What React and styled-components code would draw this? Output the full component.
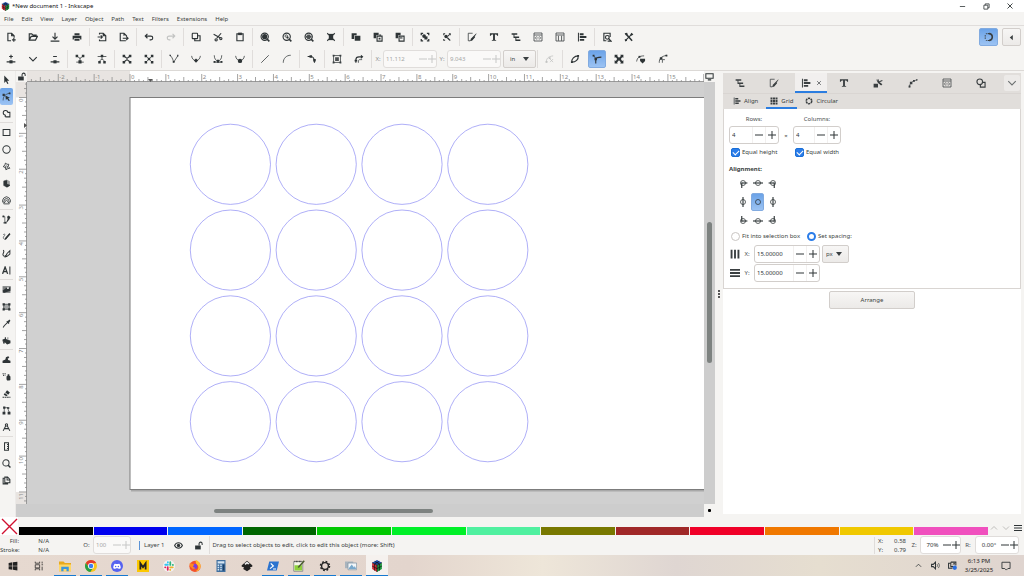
import React, { useState, useEffect, useRef } from 'react';
import styled, { createGlobalStyle } from 'styled-components';

const GlobalStyle = createGlobalStyle`
  * {
    box-sizing: border-box;
  }

  body {
    margin: 0;
    background: #f5f4f2;
    color: #3a3f41;
    font-family: 'Noto Sans', 'Open Sans', sans-serif;
    font-size: 6px;
    line-height: 8px;
  }

  button,
  input,
  select {
    margin: 0;
    padding: 0;
    border: none;
    background: none;
    color: inherit;
    font: inherit;
  }

  svg {
    display: block;
    flex-shrink: 0;
  }
`;

// every glyph is drawn on a 16x16 grid
const line = { fill: 'none', stroke: 'currentColor', strokeWidth: 1.8 };
const thin = { fill: 'none', stroke: 'currentColor', strokeWidth: 1.2 };

const ICONS = {
  newDoc: (
    <>
      <path {...line} d='M8 14H3V2h6l4 4v3M9 2v4h4' />
      <path {...line} d='M12.500 9.500v6M9.500 12.500h6' />
    </>
  ),
  open: <path {...line} d='M2 13V3h4l2 2h5v2M2 13l3-6h10l-3 6z' />,
  save: <path {...line} d='M8 1v10M4 7.500l4 4 4-4M1 14.500h14' />,
  print: (
    <>
      <path d='M4 2h8v3H4zM1 6h14v6h-2v-2H3v2H1z' />
      <path d='M4 11h8v3H4z' />
    </>
  ),
  importDoc: (
    <>
      <path {...line} d='M4 4V2h6l4 4v8H4v-2M10 2v4h4' />
      <path {...line} d='M1 8h7M6 5.500L8.500 8 6 10.500' />
    </>
  ),
  exportDoc: (
    <>
      <path {...line} d='M11 14H2V2h6l4 4v1M8 2v4' />
      <path {...line} d='M6 10h8M11.500 7l3 3-3 3' />
    </>
  ),
  undo: <path {...line} d='M5.500 3L2 6.500 5.500 10M2 6.500h9c4 0 4 6 0 6H9' />,
  redo: <path {...line} d='M10.500 3L14 6.500 10.500 10M14 6.500H5c-4 0-4 6 0 6h2' />,
  copy: (
    <>
      <rect {...line} x='2' y='2' width='8.500' height='8.500' rx='1' />
      <path {...line} d='M6 10.500V14h8.500V6H10.500' />
    </>
  ),
  cut: (
    <>
      <path {...line} d='M1 3.500l11 6M13 2L6 10' />
      <circle {...line} cx='5' cy='12.500' r='1.800' />
      <circle {...line} cx='12.500' cy='10.500' r='1.800' />
    </>
  ),
  paste: (
    <>
      <path {...line} d='M3 3h10v11H3z' />
      <path d='M5 1h6v4H5z' />
    </>
  ),
  zoomFill: (
    <>
      <circle {...line} cx='7.500' cy='7.500' r='5.800' />
      <circle cx='7.500' cy='7.500' r='4.200' />
      <path {...line} strokeWidth='2.400' d='M11 11l4 4' />
    </>
  ),
  zoomDraw: (
    <>
      <circle {...line} cx='7.500' cy='7.500' r='5.800' />
      <path {...line} strokeWidth='2.400' d='M11 11l4 4' />
      <circle {...thin} cx='6.800' cy='6.500' r='2' />
      <path d='M7.500 7.500h3v3h-3z' />
    </>
  ),
  zoomPage: (
    <>
      <circle {...line} cx='7.500' cy='7.500' r='5.800' />
      <path {...line} strokeWidth='2.400' d='M11 11l4 4' />
      <path d='M5 4h5v7H5zM3 6h9v3H3z' opacity='.85' />
    </>
  ),
  zoomCenter: (
    <>
      <path d='M4.500 3h7v10h-7z' />
      <path {...line} d='M2 2l3 3M14 2l-3 3M2 14l3-3M14 14l-3-3' />
    </>
  ),
  duplicate: <path d='M1 2h8v3H5v6H1zM6 6h9v8H6z' />,
  clone: (
    <>
      <path d='M1 1h8v4H5v5H1z' />
      <path {...line} d='M6.500 6.500h8v8h-8z' />
      <path d='M9 9h3v3H9zM10 4h3v2h-3z' />
    </>
  ),
  unclone: (
    <>
      <path d='M1 1h8v4H5v5H1z' />
      <path {...line} d='M6.500 6.500h8v8h-8z' />
      <path {...line} d='M8 9.500h4' />
    </>
  ),
  group: (
    <>
      <path d='M1 1h4v2H3v2H1zM11 1h4v4h-2V3h-2zM1 11h2v2h2v2H1zM13 11h2v4h-4v-2h2z' />
      <circle cx='6.500' cy='6.500' r='3' />
      <path d='M7 7h5v5H7z' />
    </>
  ),
  ungroup: (
    <>
      <path d='M2 2h3v1.500H3.500V5H2zM11 2h3v3h-1.500V3.500H11zM2 11h1.500v1.500H5V14H2z' />
      <circle cx='6.500' cy='7' r='2.800' />
      <path d='M9 8l5 5-2 1-4-4zM9 6l3-3 1 1-3 3z' />
    </>
  ),
  fillStroke: (
    <>
      <path {...thin} d='M9 2H2v12h3' />
      <path d='M15 2L7 10l-3 5 5-3L15 3z' />
      <path {...line} d='M12 7v1l-5 6' />
    </>
  ),
  textT: <path d='M1.500 2h13v4H13c-.3-1.500-1-2-3.500-2v8.500l2 .5v1h-7v-1l2-.5V4C4 4 3.300 4.500 3 6H1.500z' />,
  layers: <path d='M1 2h9v2.500H1zM4 4h1.500v4H4zM4 7h9v2.500H4zM7 9h1.500v4H7zM7 12h8v2.500H7z' />,
  xml: (
    <>
      <path {...thin} d='M1.600 1.600h12.800v12.800H1.600z' />
      <path {...thin} d='M2 4.800h12' />
      <path {...thin} d='M6 7L4 9.500 6 12M10 7l2 2.500-2 2.500M7 9.500h2' />
    </>
  ),
  css: (
    <>
      <path {...thin} d='M1.600 1.600h12.800v12.800H1.600z' />
      <path {...thin} d='M2 4.800h12' />
      <path {...thin} d='M5.500 6v8M10.500 6v8' />
    </>
  ),
  align: (
    <>
      <path d='M1.500 1h1.600v14H1.500z' />
      <path d='M4.500 2h6v3h-6zM4.500 6.500H15v3H4.500zM4.500 11h7v3h-7z' />
    </>
  ),
  docProps: (
    <>
      <path {...line} d='M7 14H3V2h10v6' />
      <circle {...line} cx='8.500' cy='8.500' r='3' />
      <path {...line} d='M10 10l4.500 4.500H9' />
    </>
  ),
  prefs: (
    <>
      <path stroke='currentColor' strokeWidth='2.400' d='M3 3l10 11' />
      <path {...line} d='M13 3L2.500 13.500' />
      <path d='M1 2l4-1 1 3-3 1zM12 1l3 3-3 2-2-2zM1 12l3-1 1 3-3 1z' />
    </>
  ),
  addNode: (
    <>
      <path {...line} d='M8 1v6M5 4h6M1 12.500h14' />
      <path d='M5.500 10h5v5h-5z' />
    </>
  ),
  chevron: <path {...line} d='M2 5l6 6 6-6' />,
  chevronUp: <path {...line} d='M2 11l6-6 6 6' />,
  delNode: (
    <>
      <path {...line} d='M5 4h6M1 12.500h14' />
      <path d='M5.500 10h5v5h-5z' />
    </>
  ),
  joinNode: (
    <>
      <path d='M1 1h4v4H1zM11 1h4v4h-4zM5.500 10h5v5h-5z' />
      <path {...thin} d='M4 4l4 3 4-3M8 6v5M2 13h12' />
    </>
  ),
  breakNode: (
    <>
      <path d='M6 1h4v4H6zM2 11h4v4H2zM10 11h4v4h-4z' />
      <path {...thin} d='M1 4h14M8 5v4M4 11l4-3 4 3' />
    </>
  ),
  joinSeg: (
    <>
      <path d='M1 1h4v4H1zM11 1h4v4h-4zM1 11h4v4H1zM11 11h4v4h-4z' />
      <path {...line} d='M4 4l4 3 4-3M4 12l4-3 4 3' />
    </>
  ),
  delSeg: (
    <>
      <path d='M1 1h4v4H1zM11 1h4v4h-4zM1 11h4v4H1zM11 11h4v4h-4zM6 6h4v4H6z' />
      <path {...thin} d='M5 5l6 6M11 5l-6 6' />
    </>
  ),
  cusp: (
    <>
      <path {...thin} d='M1 2c3 1 5 6 6.500 11L14 3' />
      <path d='M6 11h3v3H6zM1 1h2v2H1zM13 1h2v3h-2z' />
    </>
  ),
  smooth: (
    <>
      <path {...thin} d='M1 3c1 10 13 10 14 0' />
      <path d='M8 7l3.500 3.500L8 14l-3.500-3.500z' />
    </>
  ),
  symmetric: (
    <>
      <path {...thin} d='M2 2c0 12 12 12 12 0M1 13h14' />
      <path d='M6 9h4v5H6zM1 11h3v3H1zM12 11h3v3h-3z' />
    </>
  ),
  autoSmooth: (
    <>
      <path {...thin} d='M1 3c1 10 13 10 14 0' />
      <circle cx='8' cy='11' r='3.500' />
    </>
  ),
  segLine: <path {...thin} d='M2 14L14 2' />,
  segCurve: <path {...thin} d='M2 14C2 7 7 2 14 2' />,
  corners: (
    <>
      <path {...line} d='M1 4h5c4 0 6 3 6 10' />
      <path d='M4 2h4v4H4zM10 8h4v4h-4z' />
    </>
  ),
  objToPath: (
    <>
      <path {...thin} d='M2.500 2.500h11v11h-11z' />
      <path d='M1 1h3v3H1zM12 1h3v3h-3zM1 12h3v3H1zM12 12h3v3h-3zM5 5h6v6H5z' opacity='.85' />
    </>
  ),
  strokeToPath: (
    <>
      <path {...line} d='M3 14V9c0-3 2-4.500 5-4.500h4' />
      <path {...thin} d='M7 14v-3c0-1.500 1-2 3-2h3' />
      <path d='M11 1l4 3.500-4 3.500zM1 9h4v3H1z' />
    </>
  ),
  lpe: (
    <>
      <path {...thin} d='M2 14C2 7 5 4 13 3M8 8l5 5M13 8l-5 5' />
      <path d='M1 11h3v3H1zM6 5h3v3H6z' />
    </>
  ),
  editClip: (
    <>
      <path {...line} d='M3 13C2 8 7 3 13 3c1 6-4 10-10 10z' />
      <path d='M1.500 11.500h3v3h-3zM11.500 1.500h3v3h-3z' />
    </>
  ),
  handles: (
    <>
      <path {...line} d='M6 15V9c0-2 3-4 9-4' />
      <path {...thin} d='M2 2l4 5' />
      <path d='M1 1h3v3H1zM4 6h4v4H4z' />
    </>
  ),
  transform: (
    <>
      <path d='M1 1h5L5 3l3 3 3-3-1-2h5v5l-2-1-2 3 2 3 2-1v5h-5l1-2-3-3-3 3 1 2H1v-5l2 1 2-3-2-3-2 1z' />
    </>
  ),
  mask: (
    <>
      <path {...thin} d='M1 12C2 6 5 3 13 3' />
      <path d='M6.500 7.500h8V11l-4 4-4-4z' />
      <path d='M4 3h3v3H4z' />
    </>
  ),
  outline: (
    <>
      <path {...thin} d='M2 14C2 7 5 4 14 2' />
      <path {...thin} d='M7 14V9h4' />
      <path d='M3 5h4v4H3zM12 1h3v3h-3z' />
    </>
  ),
  snap: (
    <>
      <path fill='none' stroke='currentColor' strokeWidth='2.600' d='M8 2.500c7 0 7 11 0 11' />
      <path fill='none' stroke='currentColor' strokeWidth='1.800' strokeDasharray='2.200 1.500' d='M8 2.500H3M8 13.500H3M2 5v7' />
    </>
  ),
  triLeft: <path d='M11 2v12L4 8z' />,
  triDown: <path d='M2 4h12L8 12z' />,
  cursor: <path d='M4 1l9 9H9l2.500 5-2 1L7 11l-3 3z' />,
  node: (
    <>
      <path {...thin} d='M2 15C2 8 5 4 14 2' />
      <path d='M1 3h4v4H1zM12 1h3v3h-3zM6 6l8 4-3 1 3 4-2 1-3-4-2 2z' />
    </>
  ),
  builder: <path {...line} d='M6 11a4.200 4.200 0 1 1 4.500-5H14v8H7c-2 0-2-3 0-3' />,
  rect: <path {...line} d='M2 2.500h12v11H2z' />,
  circle: <circle {...line} cx='8' cy='8' r='6.500' />,
  star: (
    <>
      <path {...line} strokeWidth='1.500' d='M6 2l3 2 3 0-1 4 3 3-4 1-3 2-1-4-4-2 3-2z' />
      <circle {...thin} cx='8' cy='9' r='2' />
    </>
  ),
  box3d: (
    <>
      <path d='M8 1l6 3v8l-6 3-6-3V4z' opacity='.45' />
      <path d='M3 3l6-1v7l5 1v2l-5 3-6-4z' />
    </>
  ),
  spiral: (
    <path {...line} strokeWidth='1.500' d='M13 13.500A7 7 0 1 0 3 13.500M11 12.500A4.500 4.500 0 1 0 5 12.500M9.500 11a2 2 0 1 0-3 0M3 14h10' />
  ),
  pen: (
    <>
      <path {...thin} d='M1 3h4v9M2 14h6' />
      <path d='M9 3l3-2 3 3-2 4-4 5-1-1 2-5zM1 1h3v3H1zM4 12h4v3H4z' />
    </>
  ),
  pencil: (
    <>
      <path d='M13 2l2 2-8 9-3 1 1-3z' />
      <path {...thin} d='M2 5c3-3 4 0 2 2s-2 4-1 5' />
      <path {...line} d='M6 13L14 3' />
    </>
  ),
  calligraphy: (
    <>
      <path {...line} d='M2 2c4 3-2 6 0 9s4 2 5 0' />
      <path {...line} d='M6 14l3-6 5-5v6l-5 4z' />
    </>
  ),
  textA: (
    <>
      <path {...line} strokeWidth='2.400' d='M1 14L5.500 2 10 14M3 10h5' />
      <path {...line} d='M14 1v14' />
    </>
  ),
  gradient: (
    <>
      <path d='M1 2h14v12H1z' opacity='.6' />
      <path d='M1 10l7-5 3 2 4-5v8L3 14z' />
      <path d='M9 4h3v3H9z' fill='#ddd' />
    </>
  ),
  mesh: (
    <>
      <path d='M3 4h10v9H3z' opacity='.4' />
      <path d='M1 2h4v4H1zM11 2h4v4h-4zM1 11h4v4H1zM11 11h4v4h-4z' />
      <path {...thin} d='M3 4h10v9H3z' />
    </>
  ),
  dropper: (
    <>
      <path d='M10 4l3-3 2 2-3 4z' />
      <path {...line} d='M11 5L4 12l-2 3' />
      <path stroke='currentColor' strokeWidth='2' d='M8.500 4l4 4' />
    </>
  ),
  bucket: <path d='M1 6l4-1V2h2v3l3 2V2h1v5l4 1v5l-6 2-4-4-1 3-2-1V9L1 10z' />,
  tweak: <path d='M1 14v-4l5-2 1-4 4-2 2 2-2 2h-1l1 3 4 1v4z' />,
  spray: (
    <>
      <path d='M8 8l2-2V4h3v2l2 2v6l-2 1H9l-1-2z' />
      <path {...line} strokeDasharray='2 1.500' d='M1 3h7M2 6h4' />
    </>
  ),
  eraser: (
    <>
      <path d='M9 2l5 4-3 4-5-4zM5 7l5 4-2 2-5-3z' />
      <path {...line} strokeDasharray='3 1' d='M1 14.500h14' />
    </>
  ),
  connector: (
    <>
      <path {...thin} d='M4 3h7v4l2 4M4 3v9' />
      <path d='M2 1h4v4H2zM1 10h5v5H1zM10 10h5v5h-5zM9 2h4v3H9z' />
    </>
  ),
  lpeTool: <path {...line} d='M2 14L6.500 5.500M9.500 5.500L14 14M4.500 10h7M6 3.500a2 2 0 1 1 4 0 2 2 0 1 1-4 0' />,
  measure: <path {...line} d='M4.500 1.500h7v13h-7zM9 4.500h2M9 8h2M9 11.500h2' />,
  zoom: (
    <>
      <circle {...line} cx='7' cy='7' r='5.500' />
      <path {...line} strokeWidth='2.500' d='M11 11l4 4' />
    </>
  ),
  pages: <path {...line} d='M4 4H2v10h8v-2M5 2h5l4 4v6H5zM9 2v5h4' />,
  lock: (
    <>
      <path d='M2 8h10v7H2z' />
      <path {...line} d='M9 8V5c0-4 5.500-4 5.500 0v2' />
    </>
  ),
  monitor: <path {...line} d='M1.500 3h13v8h-13zM5 14h6' />,
  objects: (
    <>
      <path d='M1 9h7v6H1zM5 2l5 4 5 4-2 2-5-4z' />
      <path {...line} d='M8 2l1 5M10 6l5-2' />
    </>
  ),
  nodes: (
    <>
      <path {...thin} d='M2 15c1-7 4-10 13-12' />
      <path d='M1 12h3v3H1zM3 6h4v4H3zM8 3h3v3H8zM13 2h2v2h-2z' />
    </>
  ),
  shapes: (
    <>
      <circle {...line} cx='6' cy='6' r='4.500' />
      <path {...line} d='M11 7h3.500v7.500H7V11' />
    </>
  ),
  grid: (
    <path d='M1 1h4v4H1zM6 1h4v4H6zM11 1h4v4h-4zM1 6h4v4H1zM6 6h4v4H6zM11 6h4v4h-4zM1 11h4v4H1zM6 11h4v4H6zM11 11h4v4h-4z' />
  ),
  ring: <circle cx='8' cy='8' r='5.500' fill='none' stroke='currentColor' strokeWidth='3' strokeDasharray='4.500 1.260' />,
  bars: <path d='M1 1h3v14H1zM6.500 1h3v14h-3zM12 1h3v14h-3z' />,
  rows: <path d='M0 1.500h16v3H0zM0 6.500h16v3H0zM0 11.500h16v3H0z' />,
  menu: <path d='M0 2h16v2H0zM0 7h16v2H0zM0 12h16v2H0z' />,
  minus: <path d='M0 7h16v2H0z' />,
  plus: <path d='M0 7h16v2H0zM7 0h2v16H7z' />,
  x: <path {...line} d='M3 3l10 10M13 3L3 13' />,
  eye: (
    <>
      <path {...line} d='M1 8c3-6.500 11-6.500 14 0-3 6.500-11 6.500-14 0z' />
      <circle cx='8' cy='8' r='3' />
    </>
  ),
  min: <path {...line} d='M2 8h12' />,
  restore: <path {...line} d='M2 5h9v9H2zM5 5V2h9v9h-3' />,
  speaker: (
    <>
      <path {...line} d='M1 6h3l4-4v12l-4-4H1z' />
      <path {...thin} d='M10.500 5.500c1.500 1.500 1.500 3.500 0 5M13 3.500c2.500 3 2.500 6 0 9' />
    </>
  ),
  network: (
    <>
      <path {...line} d='M8 13H1V4h3M5 2h9v6M5 2v8h5' />
      <path {...thin} d='M8 7l4-3M9 4h3v3' />
      <circle cx='12' cy='12' r='3.800' fill='#2a6fe0' />
    </>
  ),
  bell: <path {...line} strokeWidth='1.400' d='M1.500 2h13v10H11l-2.500 2.500L6 12H1.500z' />,
  windows: <path d='M1 3l6-1v5.500H1zM8 1.800L15 1v6.500H8zM1 8.500h6V14l-6-1zM8 8.500h7V15l-7-1z' />,
  taskView: <path {...thin} d='M2 1v2.500h7V1M2 6h7v5H2zM2 15v-2.500h7V15M13 1v3M13 9v6M12 6h2.500' />,
  folder: (
    <>
      <path fill='#e8a91c' d='M0 2h6l2 2h8v11H0z' />
      <path fill='#ffd767' d='M0 6h16v9H0z' />
      <path fill='#3b96dd' d='M3 9h10v6h-3v-3H6v3H3z' />
    </>
  ),
  chrome: (
    <>
      <circle cx='8' cy='8' r='8' fill='#f8c61c' />
      <path fill='#e33b2e' d='M1.100 4a8 8 0 0 1 13.800 0L8 4.500 5 9.500z' />
      <path fill='#27a047' d='M1.100 4a8 8 0 0 0 6 12l3.500-5.500L5 10z' />
      <circle cx='8' cy='8' r='4' fill='#fff' />
      <circle cx='8' cy='8' r='3' fill='#3c7df0' />
    </>
  ),
  discord: (
    <>
      <circle cx='8' cy='8' r='8' fill='#5662f0' />
      <path fill='#fff' d='M3 11c0-3 .8-5 2-6l2 .3h2L11 5c1.200 1 2 3 2 6l-2.500 1-1-1h-3l-1 1z' />
      <circle cx='6.200' cy='8.500' r='1' fill='#5662f0' />
      <circle cx='9.800' cy='8.500' r='1' fill='#5662f0' />
    </>
  ),
  monday: (
    <>
      <path fill='#fcc800' d='M0 0h16v16H0z' />
      <path fill='none' stroke='#222' strokeWidth='2.400' d='M4.500 12.500V4.500L8 9.500l3.500-5v8' />
    </>
  ),
  slack: (
    <>
      <circle cx='8' cy='8' r='8' fill='#f4f1f0' />
      <g fill='none' strokeWidth='2.400' strokeLinecap='round'>
        <path stroke='#36c5f0' d='M3 6.300h3.500M6.500 2.800v.4' />
        <path stroke='#2eb67d' d='M9.700 3v3.500M13 6.500h.3' />
        <path stroke='#ecb22e' d='M9.500 9.700H13M9.600 13v.2' />
        <path stroke='#e01e5a' d='M6.300 9.500V13M2.900 9.700h.2' />
      </g>
    </>
  ),
  firefox: (
    <>
      <circle cx='8' cy='8.500' r='7.500' fill='#f4512c' />
      <path fill='#ffbd2e' d='M9 0c3 1 7 4 6.500 9-.5 4-4 6.500-7 6 4-1 5-5 3-8-2-1-3-4-2.500-7z' />
      <circle cx='7.500' cy='8.500' r='3.500' fill='#7a3fe0' />
      <path fill='#ff8a1f' d='M1 4l3 1 3 1-2 3 4 2-4 1-4-4z' />
    </>
  ),
  calc: (
    <>
      <path fill='#3f6f9f' d='M2 0h12v16H2z' />
      <path fill='#d4e4f2' d='M3.500 1.500h9v3h-9zM3.500 6h2v2h-2zM7 6h2v2H7zM3.500 9h2v2h-2zM7 9h2v2H7zM3.500 12h2v2h-2zM7 12h2v2H7z' />
      <path fill='#1c3f66' d='M10.500 6h2v8h-2z' />
    </>
  ),
  inkscape: (
    <>
      <path fill='#222' d='M8 1l7 6c1 2-1 2.500-3 2.500l1 2L8 15l-5-3 1-2.500C2 9.500 0 9 1 7z' />
      <path fill='#e8e8e8' d='M8 2l3.500 3-2 1L8 5 6 6.500 4.500 5z' />
    </>
  ),
  shell: (
    <>
      <path fill='#2a73cf' d='M3 2h13l-3 12H0z' />
      <path fill='none' stroke='#fff' strokeWidth='1.600' d='M5 4.500L8.500 8 4 11.500M8 12h4' />
    </>
  ),
  notepad: (
    <>
      <path fill='#f3f6e8' stroke='#777' d='M1 2h12v13H1z' />
      <path fill='#8ed03c' d='M2 7h10v7H2z' />
      <path stroke='#4c5b30' strokeWidth='2' d='M15 1L7 10' />
      <path stroke='#333' strokeDasharray='1 1' strokeWidth='2' d='M2 2h10' />
    </>
  ),
  gear: (
    <>
      <circle {...line} cx='8' cy='8' r='4.500' />
      <circle cx='8' cy='8' r='6' fill='none' stroke='currentColor' strokeWidth='2' strokeDasharray='2.350 2.362' />
    </>
  ),
  image: (
    <>
      <path fill='#a9b4bd' d='M0 2h11v9H0z' />
      <path fill='#f2f6f8' stroke='#8194a3' d='M4 4h11.500v9H4z' />
      <path fill='#78a8cc' d='M5 11l4-5 3 4 1-2 2 4H5z' />
    </>
  ),
  cube: (
    <>
      <path fill='#1b4fae' d='M8 0l6.500 3.500L8 7 1.500 3.500z' />
      <path fill='#d2303a' d='M1.500 3.500L8 7v9l-6.500-4z' />
      <path fill='#1f9a42' d='M14.500 3.500L8 7v9l6.500-4z' />
      <path stroke='#111' strokeWidth='.9' fill='none' d='M8 7v9M1.500 3.500L8 7l6.500-3.500M4.800 1.800l6.400 3.500v9M11.200 1.800L4.800 5.300v9M1.500 8L8 11.500 14.500 8' />
    </>
  ),
};

function Icon({ name, size = 10 }) {
  return (
    <svg width={size} height={size} viewBox='0 0 16 16' fill='currentColor' aria-hidden='true'>
      {ICONS[name]}
    </svg>
  );
}

const Window = styled.div`
  display: flex;
  flex-direction: column;
  min-height: 100vh;
`;

const TitleBar = styled.header`
  display: flex;
  align-items: center;
  gap: 2px;
  height: 12px;
  padding: 0 8px 0 1px;
  background: #fff;
  color: #111;
`;

const TitleText = styled.h1`
  flex: 1;
  margin: 0;
  font-size: 6px;
  font-weight: 400;
`;

const WindowButtons = styled.div`
  display: flex;
  gap: 12px;
`;

const PlainButton = styled.button`
  display: flex;
  align-items: center;
  justify-content: center;
  width: 12px;
  height: 12px;
  color: ${({ $muted }) => ($muted ? '#b9b8b6' : '#2e3436')};
`;

const MenuBar = styled.nav`
  display: flex;
  align-items: center;
  height: 14px;
  border-bottom: 1px solid #e0dddb;
`;

const MenuItem = styled.button`
  padding: 0 4px;
  font-size: 6px;
`;

const Toolbars = styled.div`
  display: flex;
  height: 45px;
  padding-right: 3px;
  border-bottom: 1px solid #dcd9d6;
`;

const ToolbarRows = styled.div`
  flex: 1;
  display: flex;
  flex-direction: column;
`;

const Toolbar = styled.div`
  display: flex;
  align-items: center;
  height: 22px;
`;

const Separator = styled.span`
  width: 1px;
  height: 18px;
  margin: 0 1px;
  background: #e0dddb;
`;

const ToolButton = styled.button`
  display: flex;
  align-items: center;
  justify-content: center;
  width: ${({ $active, $narrow }) => ($active ? '18px' : $narrow ? '20px' : '22px')};
  height: 18px;
  margin: ${({ $active }) => ($active ? '0 2px' : '0')};
  border: ${({ $active }) => ($active ? '1px solid #82abe0' : 'none')};
  border-radius: 2px;
  background: ${({ $active }) =>
    $active ? 'linear-gradient(#6ba3e8, #9cc3f3)' : 'none'};
  color: #2e3436;
  opacity: ${({ $faded }) => ($faded ? 0.25 : 1)};
`;

const SnapArea = styled.div`
  display: flex;
  gap: 4px;
  padding-top: 2px;
`;

const RaisedButton = styled.button`
  display: flex;
  align-items: center;
  justify-content: center;
  width: ${({ $wide }) => ($wide ? '86px' : '19px')};
  height: 18px;
  border: 1px solid #d2cecb;
  border-radius: 2px;
  background: linear-gradient(#f7f6f5, #eceae8);
`;

const SnapButton = styled(RaisedButton)`
  border-color: #82abe0;
  background: linear-gradient(#6ba3e8, #9cc3f3);
`;

const FieldLabel = styled.label`
  width: ${({ $w }) => $w || 10}px;
  text-align: center;
  white-space: nowrap;
  color: ${({ $faded }) => ($faded ? '#8f9292' : '#4a4e50')};
`;

const SpinBox = styled.span`
  display: flex;
  align-items: center;
  width: ${({ $w }) => $w}px;
  height: 18px;
  padding-left: 2px;
  border: 1px solid ${({ $flat }) => ($flat ? '#e0dddb' : '#d2cecb')};
  border-radius: 3px;
  background: ${({ $disabled }) => ($disabled ? '#faf9f8' : '#fff')};
  color: ${({ $disabled }) => ($disabled ? '#a5a7a7' : '#2e3436')};
`;

const SpinInput = styled.input`
  flex: 1;
  min-width: 0;
  outline: none;
  text-align: ${({ $center }) => ($center ? 'center' : 'left')};
`;

const SpinButton = styled.button`
  display: flex;
  align-items: center;
  justify-content: center;
  width: ${({ $tight }) => ($tight ? '9px' : '13px')};
  height: 16px;
  border-left: ${({ $tight }) => ($tight ? 'none' : '1px solid #f2f0ef')};
  opacity: ${({ disabled }) => (disabled ? 0.6 : 1)};
`;

const SelectBox = styled.span`
  display: grid;
  align-items: center;
  width: ${({ $w }) => $w}px;
  height: 18px;
  margin-left: 2px;
  padding-right: 5px;
  border: 1px solid #d2cecb;
  border-radius: 2px;
  background: linear-gradient(#f7f6f5, #eceae8);

  select,
  svg {
    grid-area: 1 / 1;
  }

  select {
    width: 100%;
    padding-left: ${({ $w }) => ($w > 30 ? '6px' : '3px')};
    appearance: none;
    outline: none;
  }

  svg {
    justify-self: end;
    pointer-events: none;
  }
`;

const Main = styled.main`
  flex: 1;
  display: flex;
  min-height: 0;
`;

const ToolBox = styled.aside`
  display: flex;
  flex-direction: column;
  width: 16px;
  padding-right: 2px;
  border-right: 1px solid #eceae8;
`;

const ToolBoxButton = styled.button`
  display: flex;
  align-items: center;
  justify-content: center;
  height: 17px;
  border-radius: 2px;
  background: ${({ $active }) =>
    $active ? 'linear-gradient(#6ba3e8, #9cc3f3)' : 'none'};
  color: #2e3436;
`;

const ToolBoxRule = styled.span`
  height: 1px;
  margin-bottom: 1px;
  background: #dfdcda;
`;

const Editor = styled.section`
  flex: 1;
  display: grid;
  grid-template-columns: 11px minmax(0, 1fr) 11px;
  grid-template-rows: 11px minmax(0, 1fr) 13px;
  min-width: 0;
`;

const Corner = styled.button`
  display: flex;
  align-items: center;
  justify-content: center;
  color: #2e3436;
`;

const Drawing = styled.svg`
  width: 100%;
  height: 100%;
  background: ${({ $bg }) => $bg};
  overflow: hidden;
`;

const ScrollTrack = styled.div`
  display: flex;
  align-items: center;
  flex-direction: ${({ $vertical }) => ($vertical ? 'column' : 'row')};
  grid-column: ${({ $vertical }) => ($vertical ? 'auto' : '1 / 3')};
  background: #cdcdcd;
`;

const ScrollSpace = styled.span`
  flex: ${({ $grow }) => $grow} 0 0;
`;

const ScrollThumb = styled.span`
  flex: ${({ $grow }) => $grow} 0 0;
  width: ${({ $vertical }) => ($vertical ? '5px' : 'auto')};
  height: ${({ $vertical }) => ($vertical ? 'auto' : '4px')};
  border-radius: 3px;
  background: #7d8280;
`;

const Splitter = styled.div`
  display: flex;
  align-items: center;
  justify-content: center;
  width: 8px;
`;

const Panel = styled.aside`
  display: flex;
  flex-direction: column;
  flex: 0 0 298px;
  margin: 2px 3px 3px 0;
  background: #fff;
`;

const DialogTabs = styled.div`
  display: flex;
  align-items: center;
  height: 20px;
  padding-right: 1px;
  background: #e1dedb;
`;

const DialogTab = styled.button`
  display: flex;
  align-items: center;
  justify-content: center;
  gap: 5px;
  flex: ${({ $active }) => ($active ? '0 0 32px' : '1')};
  height: 20px;
  margin-left: ${({ $active }) => ($active ? '4px' : '0')};
  padding-top: 1px;
  border-bottom: 2px solid ${({ $active }) => ($active ? '#2b7de0' : '#e1dedb')};
  background: ${({ $active }) => ($active ? '#f1efee' : 'none')};
`;

const TabsMenu = styled.button`
  display: flex;
  align-items: center;
  justify-content: center;
  width: 16px;
  height: 16px;
  margin-left: 6px;
  border-radius: 2px;
  background: #eceae8;
  color: #6b6f70;
`;

const SubTabs = styled.div`
  display: flex;
  gap: 4px;
  height: 16px;
  padding-left: 6px;
  border-top: 1px solid #d9d5d2;
  background: #e1dedb;
`;

const SubTab = styled.button`
  display: flex;
  align-items: center;
  gap: 3px;
  padding: 1px 4px 0;
  border-bottom: 2px solid ${({ $active }) => ($active ? '#2b7de0' : 'transparent')};
`;

const GridForm = styled.div`
  display: flex;
  flex-direction: column;
  align-items: flex-start;
  padding: 6px 5px 6px;
  border: 1px solid #d9d5d2;
  border-top: none;
`;

const CountRow = styled.div`
  display: flex;
  gap: 4px;
`;

const CountGroup = styled.div`
  display: flex;
  flex-direction: column;
  gap: 3px;
  min-width: 50px;
`;

const Times = styled.span`
  width: 6px;
  padding-top: 17px;
  text-align: center;
`;

const Choice = styled.label`
  display: flex;
  align-items: center;
  gap: 2px;
  height: 10px;
  margin-left: 2px;
  white-space: nowrap;
`;

const CheckBox = styled.input`
  appearance: none;
  display: grid;
  place-items: center;
  width: 9px;
  height: 9px;
  border: 1px solid #1a6fd8;
  border-radius: 2px;
  background: #2b7de9;

  &:checked::before {
    content: '';
    width: 5px;
    height: 3px;
    border: solid #fff;
    border-width: 0 0 1px 1px;
    transform: rotate(-45deg);
  }
`;

const Radio = styled.input`
  appearance: none;
  width: 9px;
  height: 9px;
  border: 1px solid #c9c5c2;
  border-radius: 50%;
  background: #fff;

  &:checked {
    border: 2px solid #2b7de9;
  }
`;

const Heading = styled.h2`
  margin: 8px 0 5px;
  font-size: 6px;
  font-weight: 700;
  line-height: 8px;
`;

const AnchorGrid = styled.div`
  display: grid;
  grid-template-columns: repeat(3, 13px);
  grid-template-rows: repeat(3, 18px);
  gap: 1px 2px;
  margin: -4px 0 1px 7px;
`;

const AnchorButton = styled.button`
  display: flex;
  align-items: center;
  justify-content: center;
  border: ${({ $active }) => ($active ? '1px solid #82abe0' : 'none')};
  border-radius: 2px;
  background: ${({ $active }) =>
    $active ? 'linear-gradient(#6ba3e8, #9cc3f3)' : 'none'};
`;

const RadioRow = styled.div`
  display: flex;
  gap: 5px;
  margin-bottom: 3px;
`;

const SpacingRow = styled.div`
  display: flex;
  align-items: center;
  height: 19px;
  padding-left: 1px;
`;

const ArrangeArea = styled.div`
  display: flex;
  justify-content: center;
  padding-top: 2px;
`;

const Palette = styled.div`
  display: flex;
  align-items: flex-end;
  height: 18px;
`;

const NoColor = styled.button`
  width: 18px;
  height: 18px;
  background: #fff;
`;

const Swatches = styled.div`
  flex: 1;
  display: flex;
  gap: 1px;
  padding-left: 1px;
`;

const Swatch = styled.button`
  flex: 1;
  height: 8px;
  background: ${({ $color }) => $color};
`;

const PaletteButtons = styled.div`
  display: flex;
  align-items: center;
  height: 15px;
`;

const StatusBar = styled.footer`
  display: flex;
  align-items: center;
  height: 20px;
  padding-right: 5px;
`;

const StyleTable = styled.dl`
  display: grid;
  grid-template-columns: 19px 30px;
  gap: 1px 0;
  width: 80px;
  margin: 0;
  text-align: right;

  dd {
    margin: 0;
  }
`;

const LayerButton = styled.button`
  display: flex;
  align-items: center;
  height: 9px;
  margin: 0 4px 0 8px;
  padding-left: 4px;
  border-left: 1px solid #5b93d6;
`;

const Hint = styled.p`
  flex: 1;
  margin: 0 1px;
  white-space: nowrap;
`;

const Coords = styled.dl`
  display: grid;
  grid-template-columns: 9px 19px;
  gap: 1px 0;
  margin: 0 2px;
  padding-left: 3px;
  border-left: 1px solid #dfdcda;

  dd {
    margin: 0;
    text-align: right;
  }
`;

const TaskBar = styled.div`
  display: flex;
  height: 21px;
  padding-right: 12px;
  background: linear-gradient(90deg, #e6d9d0, #e3d5cd 40%, #eee6d9 53%, #dfd6d2 66%, #e6ded0 80%, #dfd4cf);
`;

const TaskButton = styled.button`
  display: flex;
  align-items: center;
  justify-content: center;
  width: 26px;
  height: 21px;
  padding-top: 1px;
  border-right: 2px solid transparent;
  border-left: 2px solid transparent;
  background: ${({ $front }) => ($front ? '#f5f1ee' : 'none')};
  background-clip: padding-box;
  box-shadow: ${({ $running }) => ($running ? 'inset 0 -1px #1478d0' : 'none')};
  color: #222;
`;

const Tray = styled.div`
  display: flex;
  align-items: center;
  gap: 5px;
  margin-left: auto;
`;

const Clock = styled.time`
  width: 32px;
  color: #222;
  line-height: 9px;
  text-align: center;
`;

const COMMANDS = [
  ['newDoc', 'open', 'save', 'print'],
  ['importDoc', 'exportDoc'],
  ['undo', 'redo'],
  ['copy', 'cut', 'paste'],
  ['zoomFill', 'zoomDraw', 'zoomPage', 'zoomCenter'],
  ['duplicate', 'clone', 'unclone'],
  ['group', 'ungroup'],
  ['fillStroke', 'textT', 'layers', 'xml', 'css', 'align'],
  ['docProps', 'prefs'],
];

const NODE_COMMANDS = [
  ['addNode', 'chevron', 'delNode'],
  ['joinNode', 'breakNode'],
  ['joinSeg', 'delSeg'],
  ['cusp', 'smooth', 'symmetric', 'autoSmooth'],
  ['segLine', 'segCurve'],
  ['corners'],
  ['objToPath', 'strokeToPath'],
];

const TOOLS = [
  ['cursor', 'node', 'builder'],
  ['rect', 'circle', 'star', 'box3d', 'spiral'],
  ['pen', 'pencil', 'calligraphy', 'textA'],
  ['gradient', 'mesh', 'dropper', 'bucket'],
  ['tweak', 'spray', 'eraser', 'connector', 'lpeTool'],
  ['measure', 'zoom', 'pages'],
];

const DIALOGS = ['layers', 'fillStroke', 'align', 'textT', 'objects', 'nodes', 'xml', 'shapes'];

const COLORS = [
  '#000000', '#0000ee', '#0066ff', '#006600', '#00c800', '#00f028', '#50f0a0',
  '#787800', '#a02828', '#f00028', '#f07800', '#f0c800', '#f050be',
];

const TASKS = [
  ['windows'], ['taskView'], ['folder', 1], ['chrome', 1], ['discord', 1],
  ['monday'], ['slack'], ['firefox'], ['calc'], ['inkscape'], ['shell', 1],
  ['notepad', 1], ['gear', 1], ['image', 1], ['cube', 1, 1],
];

const UNIT = 35.86;
const PAGE_X = 103;
const PAGE_Y = 15.5;

// one tick per eighth of an inch, as far as the ruler reaches
function ticks(origin, size) {
  const list = [];
  const first = Math.ceil((-origin / UNIT) * 8);
  const last = Math.floor(((size - origin) / UNIT) * 8);
  for (let i = first; i <= last; i++) {
    const length = i % 8 === 0 ? 8 : i % 4 === 0 ? 5 : i % 2 === 0 ? 3 : 2;
    const pos = origin + (i / 8) * UNIT;
    list.push({ value: i / 8, pos, length, labelled: length === 8 && pos + 10 < size });
  }
  return list;
}

function useSize() {
  const ref = useRef(null);
  const [size, setSize] = useState({ width: 0, height: 0 });

  useEffect(() => {
    const observer = new ResizeObserver(() => {
      const { width, height } = ref.current.getBoundingClientRect();
      setSize({ width, height });
    });
    observer.observe(ref.current);
    return () => observer.disconnect();
  }, []);

  return [ref, size];
}

function HorizontalRuler() {
  const [ref, size] = useSize();
  return (
    <Drawing ref={ref} $bg='#fff'>
      <rect width={PAGE_X} height='11' fill='#e8e4e1' />
      <path d='M0 10.500H4000' stroke='#9a9a9a' />
      {ticks(PAGE_X, size.width).map(({ value, pos, length, labelled }) => (
        <g key={value}>
          <path d={`M${pos} 11v-${length}`} stroke='#8d8d8d' strokeWidth='.8' />
          {labelled && <text x={pos + 1} y='8' fontSize='6' fill='#8a8a8a'>{value}</text>}
        </g>
      ))}
      <path d='M121 8h5l-2.500 3z' fill='#555' />
    </Drawing>
  );
}

function VerticalRuler() {
  const [ref, size] = useSize();
  return (
    <Drawing ref={ref} $bg='#e8e4e1'>
      <rect y={PAGE_Y} width='11' height={UNIT * 11} fill='#fff' />
      <path d='M10.500 0V4000' stroke='#9a9a9a' />
      {ticks(PAGE_Y, size.height).map(({ value, pos, length, labelled }) => (
        <g key={value}>
          <path d={`M11 ${pos}h-${length}`} stroke='#8d8d8d' strokeWidth='.8' />
          {labelled && (
            <text transform={`translate(7 ${pos + 1}) rotate(-90)`} textAnchor='end' fontSize='6' fill='#8a8a8a'>
              {value}
            </text>
          )}
        </g>
      ))}
      <path d='M8 41v5l3-2.500z' fill='#555' />
    </Drawing>
  );
}

function Canvas() {
  const steps = [0, 1, 2, 3];
  return (
    <Drawing $bg='#d0d0d0' role='img' aria-label='Sixteen circles in a grid'>
      <rect x={PAGE_X + 1} y='17' width='4000' height='392.500' fill='#a8a8a8' />
      <rect x={PAGE_X} y={PAGE_Y} width='4000' height='392' fill='#fff' stroke='#7c7c7c' />
      {steps.map((row) =>
        steps.map((col) => (
          <circle
            key={`${row}-${col}`}
            cx={203.4 + col * 85.8}
            cy={82.3 + row * 85.8}
            r='40.100'
            fill='none'
            stroke='#8c8cf4'
            strokeWidth='.7'
          />
        ))
      )}
    </Drawing>
  );
}

function Spin({ id, value, width, disabled, tight, center, flat, label }) {
  const [text, setText] = useState(value);
  return (
    <SpinBox $w={width} $disabled={disabled} $flat={disabled || flat}>
      <SpinInput
        id={id}
        type='text'
        value={text}
        disabled={disabled}
        $center={center}
        onChange={(e) => setText(e.target.value)}
      />
      <SpinButton disabled={disabled} $tight={tight} aria-label={`Decrease ${label}`}>
        <Icon name='minus' size={8} />
      </SpinButton>
      <SpinButton disabled={disabled} $tight={tight} aria-label={`Increase ${label}`}>
        <Icon name='plus' size={8} />
      </SpinButton>
    </SpinBox>
  );
}

function UnitSelect({ width, value }) {
  return (
    <SelectBox $w={width}>
      <select aria-label='Unit' defaultValue={value}>
        <option>in</option>
        <option>px</option>
        <option>mm</option>
      </select>
      <Icon name='triDown' size={8} />
    </SelectBox>
  );
}

function ToolGroups({ groups }) {
  return groups.map((group, index) => (
    <React.Fragment key={index}>
      {index > 0 && <Separator />}
      {group.map((name) => (
        <ToolButton key={name} aria-label={name} $faded={name === 'redo'}>
          <Icon name={name} />
        </ToolButton>
      ))}
    </React.Fragment>
  ));
}

function Anchor({ row, col }) {
  const stem = col === 0 ? 6 : 10;
  return (
    <svg width='10' height='10' viewBox='0 0 16 16' fill='none' stroke='#2e3436' strokeWidth='1.200'>
      <circle cx='8' cy='8' r='4' />
      {row !== 1 && col === 1 && <path d='M0 8h16' strokeWidth='1.800' />}
      {row === 1 && col !== 1 && <path d='M8 0v16' strokeWidth='1.800' />}
      {row !== 1 && col !== 1 && (
        <>
          <path d={col === 0 ? 'M6 8h9' : 'M10 8H1'} strokeWidth='1.800' />
          <path d={row === 0 ? `M${stem} 7v9` : `M${stem} 9V0`} strokeWidth='1.800' />
        </>
      )}
    </svg>
  );
}

function ArrangePanel() {
  return (
    <Panel>
      <DialogTabs>
        {DIALOGS.map((name) => (
          <DialogTab key={name} aria-label={name} $active={name === 'align'}>
            <Icon name={name} />
            {name === 'align' && <Icon name='x' size={6} />}
          </DialogTab>
        ))}
        <TabsMenu aria-label='More dialogs'>
          <Icon name='chevron' />
        </TabsMenu>
      </DialogTabs>
      <SubTabs>
        <SubTab><Icon name='align' size={8} />Align</SubTab>
        <SubTab $active><Icon name='grid' size={8} />Grid</SubTab>
        <SubTab><Icon name='ring' size={8} />Circular</SubTab>
      </SubTabs>
      <GridForm>
        <CountRow>
          <CountGroup>
            <FieldLabel htmlFor='rows' $w={50}>Rows:</FieldLabel>
            <Spin id='rows' value='4' width={50} label='rows' />
            <Choice><CheckBox type='checkbox' defaultChecked />Equal height</Choice>
          </CountGroup>
          <Times>×</Times>
          <CountGroup>
            <FieldLabel htmlFor='columns' $w={48}>Columns:</FieldLabel>
            <Spin id='columns' value='4' width={48} label='columns' />
            <Choice><CheckBox type='checkbox' defaultChecked />Equal width</Choice>
          </CountGroup>
        </CountRow>
        <Heading>Alignment:</Heading>
        <AnchorGrid>
          {[0, 1, 2].map((row) =>
            [0, 1, 2].map((col) => (
              <AnchorButton
                key={`${row}${col}`}
                aria-label={`Anchor ${row} ${col}`}
                $active={row === 1 && col === 1}
              >
                <Anchor row={row} col={col} />
              </AnchorButton>
            ))
          )}
        </AnchorGrid>
        <RadioRow>
          <Choice><Radio type='radio' name='mode' />Fit into selection box</Choice>
          <Choice><Radio type='radio' name='mode' defaultChecked />Set spacing:</Choice>
        </RadioRow>
        <SpacingRow>
          <Icon name='bars' />
          <FieldLabel htmlFor='gapX' $w={14}>X:</FieldLabel>
          <Spin id='gapX' value='15.00000' width={66} label='horizontal gap' />
          <UnitSelect width={27} value='px' />
        </SpacingRow>
        <SpacingRow>
          <Icon name='rows' />
          <FieldLabel htmlFor='gapY' $w={14}>Y:</FieldLabel>
          <Spin id='gapY' value='15.00000' width={66} label='vertical gap' />
        </SpacingRow>
      </GridForm>
      <ArrangeArea>
        <RaisedButton $wide>Arrange</RaisedButton>
      </ArrangeArea>
    </Panel>
  );
}

function App() {
  return (
    <>
      <GlobalStyle />
      <Window>
        <TitleBar>
          <Icon name='cube' size={9} />
          <TitleText>*New document 1 - Inkscape</TitleText>
          <WindowButtons>
            <PlainButton aria-label='Minimize'><Icon name='min' size={7} /></PlainButton>
            <PlainButton aria-label='Restore'><Icon name='restore' size={7} /></PlainButton>
            <PlainButton aria-label='Close'><Icon name='x' size={8} /></PlainButton>
          </WindowButtons>
        </TitleBar>
        <MenuBar>
          {['File', 'Edit', 'View', 'Layer', 'Object', 'Path', 'Text', 'Filters', 'Extensions', 'Help'].map((name) => (
            <MenuItem key={name}>{name}</MenuItem>
          ))}
        </MenuBar>
        <Toolbars>
          <ToolbarRows>
            <Toolbar>
              <ToolGroups groups={COMMANDS} />
            </Toolbar>
            <Toolbar>
              <ToolGroups groups={NODE_COMMANDS} />
              <Separator />
              <FieldLabel htmlFor='nodeX' $faded>X:</FieldLabel>
              <Spin id='nodeX' value='11.112' width={54} disabled tight label='X' />
              <FieldLabel htmlFor='nodeY' $faded>Y:</FieldLabel>
              <Spin id='nodeY' value='9.043' width={54} disabled tight label='Y' />
              <UnitSelect width={33} value='in' />
              <Separator />
              <ToolButton aria-label='Next effect' $faded><Icon name='lpe' /></ToolButton>
              <Separator />
              <ToolButton aria-label='Edit clip'><Icon name='editClip' /></ToolButton>
              <ToolButton aria-label='Show handles' $active><Icon name='handles' /></ToolButton>
              <ToolButton aria-label='Transform handles'><Icon name='transform' /></ToolButton>
              <ToolButton aria-label='Edit mask'><Icon name='mask' /></ToolButton>
              <ToolButton aria-label='Show outline'><Icon name='outline' /></ToolButton>
            </Toolbar>
          </ToolbarRows>
          <SnapArea>
            <SnapButton aria-label='Snap'><Icon name='snap' /></SnapButton>
            <RaisedButton aria-label='Snap options'><Icon name='triLeft' size={7} /></RaisedButton>
          </SnapArea>
        </Toolbars>
        <Main>
          <ToolBox>
            {TOOLS.map((group, index) => (
              <React.Fragment key={index}>
                {index > 0 && <ToolBoxRule />}
                {group.map((name) => (
                  <ToolBoxButton key={name} aria-label={name} $active={name === 'node'}>
                    <Icon name={name} size={9} />
                  </ToolBoxButton>
                ))}
              </React.Fragment>
            ))}
          </ToolBox>
          <Editor>
            <Corner aria-label='Lock guides'><Icon name='lock' size={9} /></Corner>
            <HorizontalRuler />
            <Corner aria-label='Display mode'><Icon name='monitor' size={9} /></Corner>
            <VerticalRuler />
            <Canvas />
            <ScrollTrack $vertical>
              <ScrollSpace $grow={140} />
              <ScrollThumb $vertical $grow={141} />
              <ScrollSpace $grow={141} />
            </ScrollTrack>
            <ScrollTrack>
              <ScrollSpace $grow={198} />
              <ScrollThumb $grow={219} />
              <ScrollSpace $grow={271} />
            </ScrollTrack>
            <Corner aria-label='Color management'>
              <svg width='3' height='3' viewBox='0 0 3 3'><rect width='3' height='3' rx='1' /></svg>
            </Corner>
          </Editor>
          <Splitter>
            <svg width='2' height='8' viewBox='0 0 2 8' fill='#555'>
              <path d='M0 0h2v2H0zM0 3h2v2H0zM0 6h2v2H0z' />
            </svg>
          </Splitter>
          <ArrangePanel />
        </Main>
        <Palette>
          <NoColor aria-label='No color'>
            <svg width='18' height='18' viewBox='0 0 18 18' stroke='#d01030' strokeWidth='1.400'>
              <path d='M2 2l15 15M17 2L2 17' />
            </svg>
          </NoColor>
          <Swatches>
            {COLORS.map((color) => (
              <Swatch key={color} $color={color} aria-label={color} />
            ))}
          </Swatches>
          <PaletteButtons>
            <PlainButton $muted aria-label='Previous colors'><Icon name='chevronUp' size={8} /></PlainButton>
            <PlainButton $muted aria-label='Next colors'><Icon name='chevron' size={8} /></PlainButton>
            <PlainButton aria-label='Palette menu'><Icon name='menu' size={8} /></PlainButton>
          </PaletteButtons>
        </Palette>
        <StatusBar>
          <StyleTable>
            <dt>Fill:</dt>
            <dd>N/A</dd>
            <dt>Stroke:</dt>
            <dd>N/A</dd>
          </StyleTable>
          <FieldLabel htmlFor='opacity' $w={13}>O:</FieldLabel>
          <Spin id='opacity' value='100' width={38} disabled tight label='opacity' />
          <LayerButton>Layer 1</LayerButton>
          <ToolButton aria-label='Hide layer' $narrow><Icon name='eye' size={9} /></ToolButton>
          <ToolButton aria-label='Lock layer' $narrow><Icon name='lock' size={9} /></ToolButton>
          <Separator />
          <Hint>Drag to select objects to edit, click to edit this object (more: Shift)</Hint>
          <Coords>
            <dt>X:</dt>
            <dd>0.58</dd>
            <dt>Y:</dt>
            <dd>0.79</dd>
          </Coords>
          <FieldLabel htmlFor='zoom' $w={12}>Z:</FieldLabel>
          <Spin id='zoom' value='70%' width={41} tight center flat label='zoom' />
          <FieldLabel htmlFor='rotation' $w={14}>R:</FieldLabel>
          <Spin id='rotation' value='0.00°' width={44} tight center flat label='rotation' />
        </StatusBar>
        <TaskBar>
          {TASKS.map(([name, running, front]) => (
            <TaskButton key={name} aria-label={name} $running={running} $front={front}>
              <Icon name={name} size={name === 'windows' || name === 'taskView' ? 10 : 12} />
            </TaskButton>
          ))}
          <Tray>
            <PlainButton aria-label='Hidden icons'><Icon name='chevronUp' size={7} /></PlainButton>
            <PlainButton aria-label='Volume'><Icon name='speaker' size={9} /></PlainButton>
            <PlainButton aria-label='Network'><Icon name='network' size={9} /></PlainButton>
            <Clock>
              6:13 PM
              <br />
              3/25/2025
            </Clock>
            <PlainButton aria-label='Notifications'><Icon name='bell' /></PlainButton>
          </Tray>
        </TaskBar>
      </Window>
    </>
  );
}

export default App;
